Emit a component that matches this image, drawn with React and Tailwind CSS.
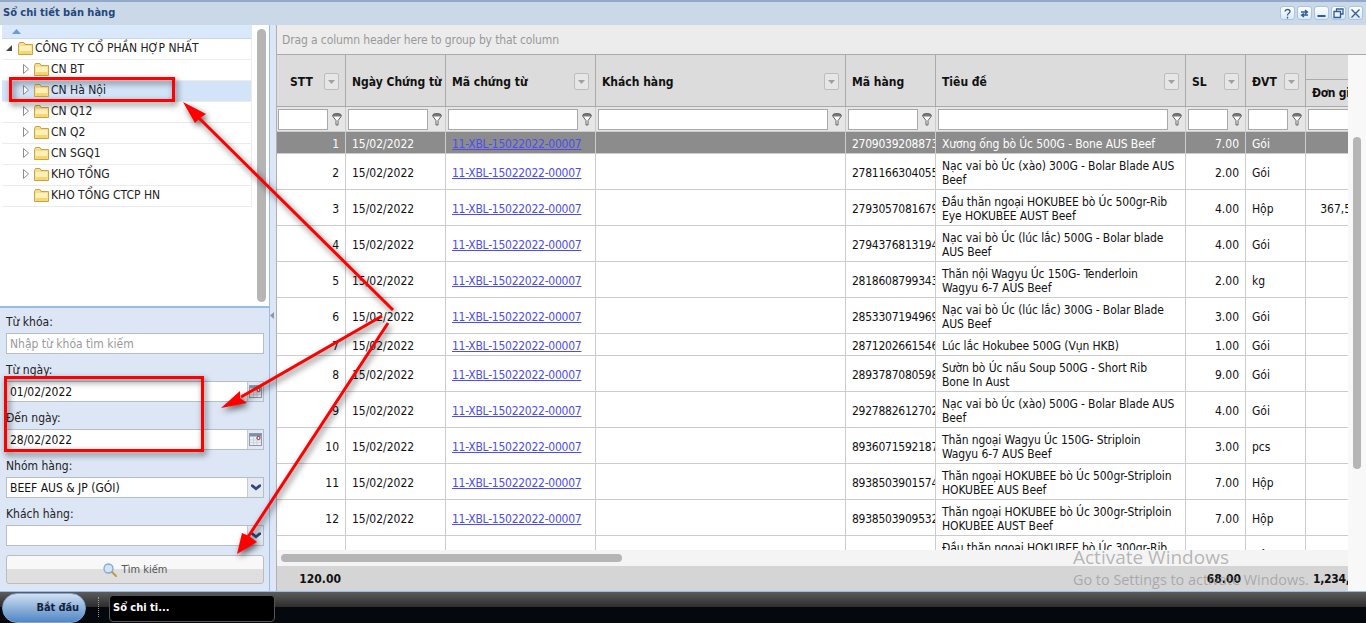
import React from "react";

const LINK = "11-XBL-15022022-00007";
const rows = [
  ["1", "2709039208873", "Xương ống bò Úc 500G - Bone AUS Beef", "7.00", "Gói", ""],
  ["2", "2781166304055", "Nạc vai bò Úc (xào) 300G - Bolar Blade AUS Beef", "2.00", "Gói", ""],
  ["3", "2793057081679", "Đầu thăn ngoại HOKUBEE bò Úc 500gr-Rib Eye HOKUBEE AUST Beef", "4.00", "Hộp", "367,500.00"],
  ["4", "2794376813194", "Nạc vai bò Úc (lúc lắc) 500G - Bolar blade AUS Beef", "4.00", "Gói", ""],
  ["5", "2818608799343", "Thăn nội Wagyu Úc 150G- Tenderloin Wagyu 6-7 AUS Beef", "2.00", "kg", ""],
  ["6", "2853307194969", "Nạc vai bò Úc (lúc lắc) 300G - Bolar Blade AUS Beef", "3.00", "Gói", ""],
  ["7", "2871202661546", "Lúc lắc Hokubee 500G (Vụn HKB)", "1.00", "Gói", ""],
  ["8", "2893787080598", "Sườn bò Úc nấu Soup 500G - Short Rib Bone In Aust", "9.00", "Gói", ""],
  ["9", "2927882612702", "Nạc vai bò Úc (xào) 500G - Bolar Blade AUS Beef", "4.00", "Gói", ""],
  ["10", "8936071592187", "Thăn ngoại Wagyu Úc 150G- Striploin Wagyu 6-7 AUS Beef", "3.00", "pcs", ""],
  ["11", "8938503901574", "Thăn ngoại HOKUBEE bò Úc 500gr-Striploin HOKUBEE AUS Beef", "7.00", "Hộp", ""],
  ["12", "8938503909532", "Thăn ngoại HOKUBEE bò Úc 300gr-Striploin HOKUBEE AUST Beef", "7.00", "Hộp", ""],
  ["13", "8938503909549", "Đầu thăn ngoại HOKUBEE bò Úc 300gr-Rib Eye HOKUBEE AUST Beef", "7.00", "Hộp", ""],
];

const tree = ["CN BT", "CN Hà Nội", "CN Q12", "CN Q2", "CN SGQ1", "KHO TỔNG", "KHO TỔNG CTCP HN"];

function Folder() {
  return (
    <svg width="15" height="13" viewBox="0 0 15 13" className="shrink-0">
      <path d="M.5 2.5 V12.5 H14.5 V2.5 H7 L6 .5 H1.5 Z" fill="#f7dc8a" stroke="#c9a24a" />
      <rect x="1.5" y="4" width="12" height="8" fill="#fdf0b8" />
      <rect x="1.5" y="9" width="12" height="3" fill="#f8d66e" />
    </svg>
  );
}

function Expand() {
  return (
    <svg width="6" height="10" viewBox="0 0 6 10" className="shrink-0">
      <path d="M.5 .5 L5.5 5 L.5 9.5 Z" fill="#fff" stroke="#8c8c8c" />
    </svg>
  );
}

function SortBtn() {
  return (
    <span className="flex h-[17px] w-[15px] shrink-0 items-center justify-center rounded-[2px] border border-[#bdbdbd] bg-[#e6e6e6]">
      <svg width="7" height="4" viewBox="0 0 7 4">
        <path d="M0 0 H7 L3.5 4 Z" fill="#a0a0a0" />
      </svg>
    </span>
  );
}

function FilterCell({ width, first }) {
  return (
    <div className={`flex h-[24px] items-start pt-[2px] ${first ? "pl-[1px]" : "pl-[2px]"}`}>
      <div className={`h-[21px] shrink-0 border border-[#a8a8a8] bg-white ${width}`} />
      <svg width="10" height="13" viewBox="0 0 10 13" className="mt-[4px] ml-[4px] shrink-0">
        <ellipse cx="5" cy="2.6" rx="4.3" ry="2.1" fill="#777" stroke="#444" strokeWidth=".7" />
        <path d="M1 3.5 L4 7.5 V12 H6 V7.5 L9 3.5" fill="#fff" stroke="#555" strokeWidth=".9" />
      </svg>
    </div>
  );
}

function TitleBtn({ children }) {
  return (
    <span className="flex h-[14px] w-[15px] items-center justify-center rounded-[3px] border border-[#a9c4e6] bg-linear-to-b from-white to-[#dbe8f8]">
      <svg width="11" height="11" viewBox="0 0 11 11" fill="none" stroke="#2f5c93" strokeWidth="1.3">
        {children}
      </svg>
    </span>
  );
}

function CalendarIcon() {
  return (
    <svg width="13" height="13" viewBox="0 0 13 13">
      <rect x=".5" y=".5" width="12" height="12" fill="#eef1f6" stroke="#8a99ad" />
      <rect x="1" y="1" width="11" height="2.5" fill="#7d8fa8" />
      <path d="M4.5 4 V12 M8 4 V12 M1 7 H12 M1 9.7 H12" stroke="#c3ccd8" strokeWidth=".8" />
      <circle cx="9.5" cy="5" r="1.6" fill="#fff" stroke="#a11a2a" />
    </svg>
  );
}

function ChevronIcon() {
  return (
    <svg width="10" height="7" viewBox="0 0 10 7">
      <path d="M0 .5 L2 .5 L5 3 L8 .5 L10 .5 V2.5 L5 6.5 L0 2.5 Z" fill="#2d4a80" />
    </svg>
  );
}

function Field({ label, value, placeholder, trigger }) {
  return (
    <div className="flex flex-col gap-[3px]">
      <label className="h-[16px] text-[12px] leading-[16px] text-[#222]">{label}</label>
      <div className="flex h-[21px] w-[258px] border border-[#b4bdcc] bg-white">
        <span className={`flex-1 pl-[3px] text-[12px] leading-[21px] ${placeholder ? "text-[#9a9a9a]" : "text-[#111]"}`}>
          {placeholder || value}
        </span>
        {trigger && (
          <span className="flex w-[16px] items-center justify-center border-l border-[#c4cbd6] bg-[#e4e8f0]">{trigger}</span>
        )}
      </div>
    </div>
  );
}

function Arrows() {
  return (
    <svg
      width="1366"
      height="623"
      viewBox="0 0 1366 623"
      className="pointer-events-none absolute top-0 left-0 drop-shadow-[2px_3px_3px_rgba(0,0,0,0.6)]"
    >
      <g stroke="#f00" strokeWidth="3" fill="none">
        <path d="M393 310 L199 118" />
        <path d="M382 316 L241 397" />
        <path d="M388 323 L248 537" />
        <rect x="10.5" y="78.5" width="163" height="22" />
        <rect x="5.5" y="377.5" width="197" height="73" />
      </g>
      <g fill="#f00">
        <polygon points="183,102 206,114 200,118 195,123" />
        <polygon points="221,408 240,391 240,398 247,403" />
        <polygon points="237,554 242,533 249,536 257,542" />
      </g>
    </svg>
  );
}

export default function App() {
  return (
    <div className="relative flex h-[623px] w-[1366px] flex-col overflow-hidden bg-[#dce6f5] font-['DejaVu_Sans_Condensed','DejaVu_Sans',sans-serif] text-[12px]">
      {/* window title */}
      <div className="flex h-[25px] shrink-0 items-center justify-between border-t-2 border-[#93a9cc] bg-[#cbd8e8] pr-[3px] pb-[1px] pl-[3px]">
        <span className="text-[11px] font-bold text-[#24477c]">Sổ chi tiết bán hàng</span>
        <div className="flex gap-[2px]">
          <TitleBtn>
            <path d="M3 3.5 C3 .8 8 .8 8 3.5 C8 5.5 5.5 5.2 5.5 7.5 M5.5 8.7 V10.5" />
          </TitleBtn>
          <TitleBtn>
            <path d="M2 4 H8 M6 2 L8.5 4 L6 6 M9 7 H3 M5 5.5 L2.5 7 L5 9" />
          </TitleBtn>
          <TitleBtn>
            <path d="M1.5 8 H9.5" strokeWidth="2" />
          </TitleBtn>
          <TitleBtn>
            <path d="M3.5 3 V1 H10 V6 H7.5 M1 3.5 H7.5 V9.5 H1 Z" />
          </TitleBtn>
          <TitleBtn>
            <path d="M1.5 1.5 L9.5 9.5 M9.5 1.5 L1.5 9.5" />
          </TitleBtn>
        </div>
      </div>

      <div className="flex h-[567px] shrink-0 border-b border-[#99bbe8]">
        {/* left panel */}
        <div className="flex w-[270px] shrink-0 flex-col border-r border-[#99bbe8]">
          <div className="flex h-[281px] shrink-0 bg-white pl-[2px]">
            <div className="w-[250px] shrink-0">
              <div className="flex h-[14px] items-center border-b border-[#c7d8ef] bg-[#d9e8fb] pl-[10px]">
                <svg width="9" height="5" viewBox="0 0 9 5">
                  <path d="M0 5 L4.5 0 L9 5 Z" fill="#6f9bd1" />
                </svg>
              </div>
              <div className="flex h-[21px] items-center border-r border-b border-[#ececec] pb-[2px] pl-[3px] text-[#222]">
                <svg width="8" height="8" viewBox="0 0 8 8" className="mr-[5px] shrink-0">
                  <path d="M7 1 V7 H1 Z" fill="#444" />
                </svg>
                <Folder />
                <span className="ml-[2px]">CÔNG TY CỔ PHẦN HỢP NHẤT</span>
              </div>
              {tree.map((t, i) => (
                <div
                  key={t}
                  className={`flex h-[21px] items-center gap-[3px] border-r border-b border-[#ececec] pb-[2px] pl-[21px] text-[#222] ${i === 1 ? "bg-[#d3e3f8]" : ""}`}
                >
                  <span className="flex w-[6px] shrink-0">{i < 6 && <Expand />}</span>
                  <span className="ml-[2px] flex">
                    <Folder />
                  </span>
                  <span className="-ml-[1px]">{t}</span>
                </div>
              ))}
            </div>
            <div className="ml-[5px] mt-[4px] h-[273px] w-[9px] rounded-full bg-[#b5b5b5]" />
          </div>
          <div className="flex flex-1 flex-col gap-[8px] border-t-2 border-[#99bbe8] bg-[#dce6f5] pt-[6px] pl-[6px]">
            <Field label="Từ khóa:" placeholder="Nhập từ khóa tìm kiếm" />
            <Field label="Từ ngày:" value="01/02/2022" trigger={<CalendarIcon />} />
            <Field label="Đến ngày:" value="28/02/2022" trigger={<CalendarIcon />} />
            <Field label="Nhóm hàng:" value="BEEF AUS & JP (GÓI)" trigger={<ChevronIcon />} />
            <Field label="Khách hàng:" trigger={<ChevronIcon />} />
            <button className="relative mt-[1px] flex h-[29px] w-[258px] items-center justify-center gap-[5px] overflow-hidden rounded-[3px] border border-[#bcbcbc] bg-linear-to-b from-[#f8f8f8] from-50% to-[#dfdfdf] to-50% pt-[1px] text-[11px] text-[#555]">
              <svg width="14" height="14" viewBox="0 0 14 14">
                <circle cx="5.5" cy="5.5" r="4.5" fill="#cfe6fa" stroke="#7fa9d4" strokeWidth="1.3" />
                <path d="M9 9 L13 13" stroke="#c49a50" strokeWidth="2.2" strokeLinecap="round" />
              </svg>
              Tìm kiếm
            </button>
          </div>
        </div>

        {/* splitter */}
        <div className="flex w-[6px] shrink-0 items-start bg-[#dce6f5] pt-[287px]">
          <svg width="4" height="7" viewBox="0 0 4 7">
            <path d="M4 0 V7 L0 3.5 Z" fill="#8c97a6" />
          </svg>
        </div>

        {/* grid */}
        <div className="flex w-[1090px] shrink-0 flex-col border-l border-[#b0b0b0] bg-white">
          <div className="flex h-[30px] shrink-0 items-center border-b border-[#aaa] bg-[#ececec] pl-[5px] text-[12px] tracking-[-0.12px] text-[#999]">
            Drag a column header here to group by that column
          </div>
          <div className="flex h-[536px]">
            <div className="flex w-[1071px] shrink-0 flex-col">
              <div className="h-[495px] overflow-hidden">
                <table className="w-[1112px] table-fixed border-separate border-spacing-0 text-[12px] text-[#111]">
                  <colgroup>
                    <col className="w-[69px]" />
                    <col className="w-[100px]" />
                    <col className="w-[150px]" />
                    <col className="w-[250px]" />
                    <col className="w-[90px]" />
                    <col className="w-[250px]" />
                    <col className="w-[60px]" />
                    <col className="w-[60px]" />
                    <col className="w-[83px]" />
                  </colgroup>
                  <thead>
                    <tr className="h-[52px] bg-[#dcdcdc] font-bold text-[#111]">
                      <th className="border-r border-b border-[#aaa] px-[6px] pt-[2px] text-left font-bold">
                        <div className="flex items-center justify-between pl-[7px]">STT<SortBtn /></div>
                      </th>
                      <th className="overflow-hidden border-r border-b border-[#aaa] pt-[2px] pl-[6px] text-left font-bold whitespace-nowrap">Ngày Chứng từ</th>
                      <th className="border-r border-b border-[#aaa] px-[6px] pt-[2px] text-left font-bold">
                        <div className="flex items-center justify-between">Mã chứng từ<SortBtn /></div>
                      </th>
                      <th className="border-r border-b border-[#aaa] px-[6px] pt-[2px] text-left font-bold">
                        <div className="flex items-center justify-between">Khách hàng<SortBtn /></div>
                      </th>
                      <th className="border-r border-b border-[#aaa] px-[6px] pt-[2px] text-left font-bold">Mã hàng</th>
                      <th className="border-r border-b border-[#aaa] px-[6px] pt-[2px] text-left font-bold">
                        <div className="flex items-center justify-between">Tiêu đề<SortBtn /></div>
                      </th>
                      <th className="border-r border-b border-[#aaa] px-[6px] pt-[2px] text-left font-bold">
                        <div className="flex items-center justify-between">SL<SortBtn /></div>
                      </th>
                      <th className="border-r border-b border-[#aaa] px-[6px] pt-[2px] text-left font-bold">
                        <div className="flex items-center justify-between">ĐVT<SortBtn /></div>
                      </th>
                      <th className="border-b border-[#aaa] p-0 text-left font-bold">
                        <div className="h-[25px] border-b border-[#aaa]" />
                        <div className="flex h-[26px] items-center pl-[6px] tracking-[-0.3px]">Đơn giá</div>
                      </th>
                    </tr>
                    <tr className="bg-[#e6e6e6]">
                      <th className="border-r border-b border-[#ccc] p-0"><FilterCell first width="w-[50px]" /></th>
                      <th className="border-r border-b border-[#ccc] p-0"><FilterCell width="w-[80px]" /></th>
                      <th className="border-r border-b border-[#ccc] p-0"><FilterCell width="w-[130px]" /></th>
                      <th className="border-r border-b border-[#ccc] p-0"><FilterCell width="w-[230px]" /></th>
                      <th className="border-r border-b border-[#ccc] p-0"><FilterCell width="w-[70px]" /></th>
                      <th className="border-r border-b border-[#ccc] p-0"><FilterCell width="w-[230px]" /></th>
                      <th className="border-r border-b border-[#ccc] p-0"><FilterCell width="w-[40px]" /></th>
                      <th className="border-r border-b border-[#ccc] p-0"><FilterCell width="w-[40px]" /></th>
                      <th className="border-b border-[#ccc] p-0"><FilterCell width="w-[60px]" /></th>
                    </tr>
                  </thead>
                  <tbody>
                    {rows.map((r, i) => {
                      const sel = i === 0;
                      const td = `border-r border-b border-[#ccc] px-[6px] pt-[5px] pb-[2px] leading-[14px] ${sel ? "bg-[#8c8c8c] text-white" : ""}`;
                      return (
                        <tr key={r[0]}>
                          <td className={`${td} text-right`}>{r[0]}</td>
                          <td className={`${td} whitespace-nowrap`}>15/02/2022</td>
                          <td className={`${td} tracking-[-0.25px] whitespace-nowrap`}>
                            <a className="text-[#4d4df0] underline">{LINK}</a>
                          </td>
                          <td className={td}></td>
                          <td className={`${td} overflow-hidden pr-0 tracking-[-0.25px] whitespace-nowrap`}>{r[1]}</td>
                          <td className={`${td} pr-[9px] tracking-[-0.1px]`}>{r[2]}</td>
                          <td className={`${td} text-right`}>{r[3]}</td>
                          <td className={td}>{r[4]}</td>
                          <td className={`${td} text-right`}>{r[5]}</td>
                        </tr>
                      );
                    })}
                  </tbody>
                </table>
              </div>
              <div className="flex h-[16px] shrink-0 items-center bg-[#f4f4f4] pl-[4px]">
                <div className="h-[8px] w-[341px] rounded-full bg-[#b5b5b5]" />
              </div>
              <div className="flex h-[25px] shrink-0 items-center overflow-hidden bg-[#d5d5d5] font-bold text-[#111]">
                <div className="w-[64px] shrink-0 text-right">120.00</div>
                <div className="w-[900px] shrink-0 text-right">68.00</div>
                <div className="ml-[72px] shrink-0 tracking-[-0.3px] whitespace-nowrap">1,234,500.00</div>
              </div>
            </div>
            <div className="flex-1 bg-[#f8f8f8] pt-[82px] pl-[5px]">
              <div className="h-[332px] w-[8px] rounded-full bg-[#b5b5b5]" />
            </div>
          </div>
        </div>
      </div>

      {/* taskbar */}
      <div className="flex h-[31px] shrink-0 bg-linear-to-b from-[#5c5c5c] from-0% via-[#2c2c2c] via-50% to-[#05080c] to-50%">
        <div className="ml-[2px] mt-[1px] flex h-[30px] w-[84px] items-center justify-end rounded-full border border-[#7ea6d6] bg-linear-to-b from-[#cfe0f3] via-[#8fb2da] to-[#4f86c6] pr-[6px] text-[11px] font-bold tracking-[-0.1px] text-[#11233f]">
          Bắt đầu
        </div>
        <div className="ml-[12px] mt-[5px] h-[20px] border-l border-dotted border-[#999]" />
        <div className="ml-[10px] mt-[3px] flex h-[27px] w-[166px] items-center rounded-[4px] border border-[#555] bg-black pl-[3px] text-[11px] font-bold text-white">
          Sổ chi ti...
        </div>
      </div>

      <Arrows />

      {/* activation watermark */}
      <div className="pointer-events-none absolute top-[545px] left-[1073px] font-['Open_Sans',sans-serif] whitespace-nowrap text-[#8a8a8a]/60">
        <div className="text-[19px] leading-[24px]">Activate Windows</div>
        <div className="mt-[1px] text-[14.4px] leading-[20px]">Go to Settings to activate Windows.</div>
      </div>
    </div>
  );
}
